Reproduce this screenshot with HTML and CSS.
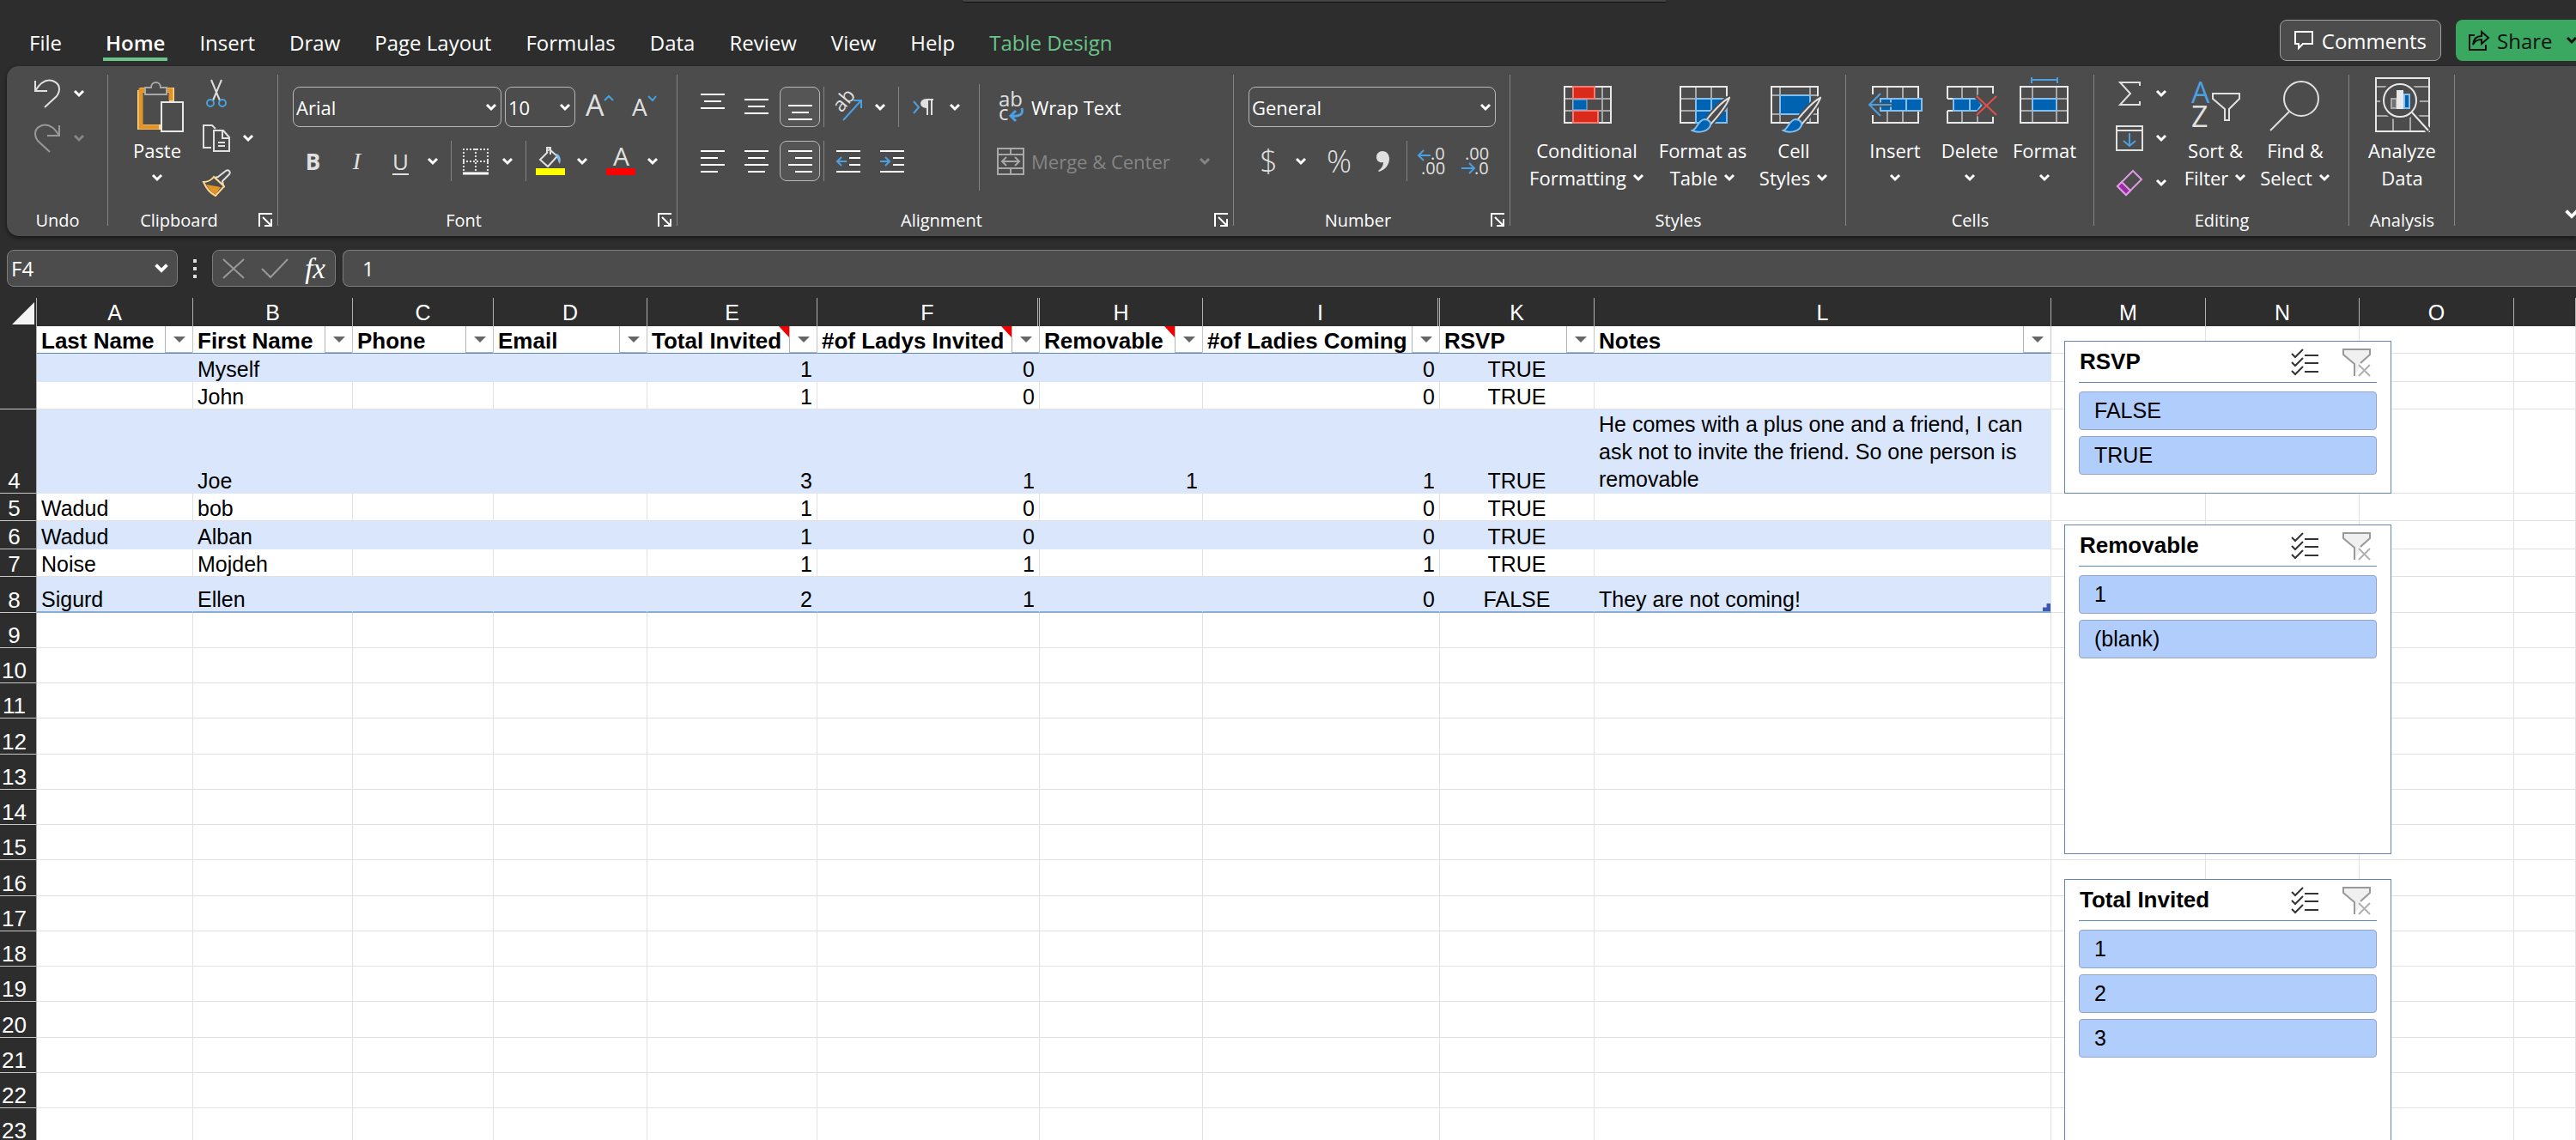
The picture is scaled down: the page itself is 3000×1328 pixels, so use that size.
FILE: index.html
```html
<!DOCTYPE html>
<html lang="en">
<head>
    <meta charset="UTF-8">
    <meta name="viewport" content="width=device-width, initial-scale=1.0">
    <title>Guest List</title>
    <link rel="stylesheet" href="styles.css">
</head>
<body>
    <!-- Shared icons -->
    <svg class="defs" aria-hidden="true">
        <symbol id="chevron" viewBox="0 0 14 10"><path d="M2 2l5 5 5-5" fill="none" stroke="currentColor" stroke-width="3"/></symbol>
        <symbol id="launcher" viewBox="0 0 17 17"><path d="M1 16V1h15M5 5l9 9M15 7v8H7" fill="none" stroke="currentColor" stroke-width="2"/></symbol>
        <symbol id="brush" viewBox="0 0 64 68">
            <path d="M63 26c-7 3-20 17-27 27l5 4C50 47 60 35 63 26z" fill="#4c4c4c" stroke="#4c4c4c" stroke-width="6"/>
            <path d="M63 26c-7 3-20 17-27 26l5 5C50 47 60 35 63 26z" fill="#4c4c4c" stroke="#e0e0e0" stroke-width="2"/>
            <path d="M20 64c6-2 6-12 14-13 6 0 9 5 6 9-4 6-14 7-20 4z" fill="#0063b1" stroke="#83beec" stroke-width="2"/>
        </symbol>
        <symbol id="checklist" viewBox="0 0 32 32">
            <path d="M1 6l4 4 9-9M1 16l4 4 9-9M1 26l4 4 9-9" fill="none" stroke="#333" stroke-width="2"/>
            <path d="M16 8h16M16 17h16M16 27h16" stroke="#333" stroke-width="2"/>
        </symbol>
        <symbol id="clear-filter" viewBox="0 0 34 34">
            <path d="M1 2h31v6L20 19v5l-6 8V19L1 8z" fill="#f0f0f0"/>
            <path d="M14 33V19L1 8V2h31v6L21 18" fill="none" stroke="#999" stroke-width="2"/>
            <path d="M19 20l13 13M32 20L19 33" stroke="#b0b0b0" stroke-width="2"/>
        </symbol>
    </svg>

    <header class="titlebar">
        <div class="search-edge"></div>
        <nav class="tabs">
            <a class="file" href="#">File</a>
            <a class="active" href="#">Home</a>
            <a href="#">Insert</a>
            <a href="#">Draw</a>
            <a href="#">Page Layout</a>
            <a href="#">Formulas</a>
            <a href="#">Data</a>
            <a href="#">Review</a>
            <a href="#">View</a>
            <a href="#">Help</a>
            <a class="design" href="#">Table Design</a>
        </nav>
        <button class="comments">
            <svg width="23" height="24" viewBox="0 0 23 24"><path d="M1 2h20v14H10l-5 5v-5H1z" fill="none" stroke="#fff" stroke-width="2"/></svg>
            Comments
        </button>
        <button class="share">
            <svg width="24" height="26" viewBox="0 0 24 26"><path d="M7 7H1v17h19v-6M5 18c1-8 5-10 10-10V3l8 7-8 7v-5c-5 0-8 2-10 6z" fill="none" stroke="#111" stroke-width="2"/></svg>
            Share
            <svg class="chev" width="14" height="10"><use href="#chevron"/></svg>
        </button>
    </header>

    <section class="ribbon">
        <div class="group undo">
            <div class="group-body">
                <div class="stack">
                    <div class="row">
                        <button class="tool" aria-label="Undo"><svg width="32" height="36" viewBox="0 0 32 36"><path d="M2 3v12h14M2 15C8 5 15 1 22 3c9 3 10 11 5 18L13 34" fill="none" stroke="#e0e0e0" stroke-width="2"/></svg></button>
                        <button class="drop" aria-label="Undo list"><svg class="chev" width="14" height="10"><use href="#chevron"/></svg></button>
                    </div>
                    <div class="row dim">
                        <button class="tool" aria-label="Redo"><svg width="32" height="36" viewBox="0 0 32 36"><path d="M30 3v12H16M30 15C24 5 17 1 10 3c-9 3-10 11-5 18l14 13" fill="none" stroke="#999" stroke-width="2"/></svg></button>
                        <button class="drop" aria-label="Redo list"><svg class="chev" width="14" height="10"><use href="#chevron"/></svg></button>
                    </div>
                </div>
            </div>
            <div class="group-label"><span>Undo</span></div>
        </div>

        <div class="group clipboard">
            <div class="group-body">
                <button class="big">
                    <svg width="64" height="68" viewBox="0 0 64 68">
                        <path d="M12 17h37v13M36 60H12V17" fill="none" stroke="#ffd890" stroke-width="6"/>
                        <path d="M34 60H13V17h35v12" fill="none" stroke="#e39426" stroke-width="5"/>
                        <path d="M18 22v-8h7c0-8 11-8 11 0h7v8z" fill="#4c4c4c" stroke="#a8a8a8" stroke-width="2"/>
                        <path d="M37 31h25v34H37z" fill="#4c4c4c" stroke="#e8e8e8" stroke-width="2"/>
                    </svg>
                    <span>Paste</span>
                    <svg class="chev under" width="14" height="10"><use href="#chevron"/></svg>
                </button>
                <div class="stack">
                    <div class="row">
                        <button class="tool" aria-label="Cut"><svg width="32" height="34" viewBox="0 0 32 34"><path d="M10 1l10 24M22 1L12 25" stroke="#e0e0e0" stroke-width="2"/><circle cx="9" cy="28" r="4" fill="none" stroke="#4aa0e0" stroke-width="2"/><circle cx="23" cy="28" r="4" fill="none" stroke="#4aa0e0" stroke-width="2"/></svg></button>
                    </div>
                    <div class="row">
                        <button class="tool" aria-label="Copy"><svg width="32" height="34" viewBox="0 0 32 34"><path d="M10 28H1V2h10l4 4M13 8h11l7 8v16H13zM23 8v9h8M18 22h8M18 26h8" fill="none" stroke="#e0e0e0" stroke-width="2"/></svg></button>
                        <button class="drop" aria-label="Copy options"><svg class="chev" width="14" height="10"><use href="#chevron"/></svg></button>
                    </div>
                    <div class="row">
                        <button class="tool" aria-label="Format Painter"><svg width="34" height="32" viewBox="0 0 34 32"><path d="M19 9l9-7c3-2 6 1 4 4l-8 8 1 5-10-9z" fill="none" stroke="#e0e0e0" stroke-width="2"/><path d="M14 9l12 11-10 11C10 28 5 22 2 15c5 0 9-2 12-6z" fill="#4c4c4c" stroke="#ffd890" stroke-width="2"/><path d="M5 18l17 3-6 9c-5-3-8-7-11-12z" fill="#e39426"/></svg></button>
                    </div>
                </div>
            </div>
            <div class="group-label"><span>Clipboard</span><button class="launch" aria-label="Clipboard settings"><svg width="17" height="17"><use href="#launcher"/></svg></button></div>
        </div>

        <div class="group font">
            <div class="group-body">
                <div class="lines">
                    <div class="row">
                        <div class="select name"><select aria-label="Font"><option>Arial</option></select><svg class="chev" width="14" height="10"><use href="#chevron"/></svg></div>
                        <div class="select size"><select aria-label="Font size"><option>10</option></select><svg class="chev" width="14" height="10"><use href="#chevron"/></svg></div>
                        <button class="tool" aria-label="Increase font size"><svg width="32" height="36" viewBox="0 0 32 36"><text x="0" y="28" font-size="34">A</text><path d="M22 10l5-5 5 5" fill="none" stroke="#4aa0e0" stroke-width="2"/></svg></button>
                        <button class="tool" aria-label="Decrease font size"><svg width="32" height="36" viewBox="0 0 32 36"><text x="3" y="28" font-size="28">A</text><path d="M22 5l5 5 4-5" fill="none" stroke="#4aa0e0" stroke-width="2"/></svg></button>
                    </div>
                    <div class="row">
                        <button class="tool letter bold">B</button>
                        <button class="tool letter italic">I</button>
                        <button class="tool letter underline">U</button>
                        <button class="drop" aria-label="Underline styles"><svg class="chev" width="14" height="10"><use href="#chevron"/></svg></button>
                        <i class="sep"></i>
                        <button class="tool" aria-label="Borders"><svg width="32" height="32" viewBox="0 0 32 32"><path d="M1 2h30M1 16h30M2 1v27M16 1v27M30 1v27" stroke="#e0e0e0" stroke-width="2" stroke-dasharray="2 2"/><path d="M1 30h30" stroke="#fff" stroke-width="3"/></svg></button>
                        <button class="drop" aria-label="Border list"><svg class="chev" width="14" height="10"><use href="#chevron"/></svg></button>
                        <i class="sep"></i>
                        <button class="tool" aria-label="Fill color"><svg width="34" height="34" viewBox="0 0 34 34"><path d="M14 6L5 15l9 8 11-12-9-8-3 2V1h4v8" fill="none" stroke="#e0e0e0" stroke-width="2"/><path d="M24 8c4 1 6 6 4 12-3-3-2-8-5-10z" fill="#83beec"/><path d="M0 25h34v8H0z" fill="#ffff00"/></svg></button>
                        <button class="drop" aria-label="Fill colors"><svg class="chev" width="14" height="10"><use href="#chevron"/></svg></button>
                        <button class="tool" aria-label="Font color"><svg width="34" height="34" viewBox="0 0 34 34"><text x="8" y="22" font-size="30">A</text><path d="M0 25h34v8H0z" fill="#ff0000"/></svg></button>
                        <button class="drop" aria-label="Font colors"><svg class="chev" width="14" height="10"><use href="#chevron"/></svg></button>
                    </div>
                </div>
            </div>
            <div class="group-label"><span>Font</span><button class="launch" aria-label="Font settings"><svg width="17" height="17"><use href="#launcher"/></svg></button></div>
        </div>

        <div class="group alignment">
            <div class="group-body">
                <div class="lines">
                    <div class="row">
                        <button class="tool" aria-label="Top align"><svg width="30" height="32" viewBox="0 0 30 32"><path d="M1 1h28M5 9h20M1 17h28" stroke="#fff" stroke-width="2"/></svg></button>
                        <button class="tool" aria-label="Middle align"><svg width="30" height="32" viewBox="0 0 30 32"><path d="M1 7h28M5 15h20M1 23h28" stroke="#fff" stroke-width="2"/></svg></button>
                        <button class="tool on" aria-label="Bottom align"><svg width="30" height="32" viewBox="0 0 30 32"><path d="M1 14h28M5 22h20M1 30h28" stroke="#fff" stroke-width="2"/></svg></button>
                        <i class="sep"></i>
                        <button class="tool" aria-label="Orientation"><svg width="34" height="34" viewBox="0 0 34 34"><text x="0" y="0" font-size="23" transform="translate(9 24) rotate(-50)">ab</text><path d="M11 32L31 10M23 9h9v9" fill="none" stroke="#4aa0e0" stroke-width="2"/></svg></button>
                        <button class="drop" aria-label="Orientation list"><svg class="chev" width="14" height="10"><use href="#chevron"/></svg></button>
                        <i class="sep"></i>
                        <button class="tool" aria-label="Text direction"><svg width="26" height="26" viewBox="0 0 26 26"><path d="M2 6l6 7-6 7" fill="none" stroke="#4aa0e0" stroke-width="2"/><path d="M17 13c-8 0-8-9 0-9h8M18 4v18M23 4v18" fill="none" stroke="#e0e0e0" stroke-width="2"/><path d="M17 13c-8 0-8-9 0-9z" fill="#e0e0e0"/></svg></button>
                        <button class="drop" aria-label="Text direction list"><svg class="chev" width="14" height="10"><use href="#chevron"/></svg></button>
                    </div>
                    <div class="row">
                        <button class="tool" aria-label="Align left"><svg width="30" height="28" viewBox="0 0 30 28"><path d="M1 2h28M1 10h20M1 18h28M1 26h20" stroke="#fff" stroke-width="2"/></svg></button>
                        <button class="tool" aria-label="Center"><svg width="30" height="28" viewBox="0 0 30 28"><path d="M1 2h28M5 10h20M1 18h28M5 26h20" stroke="#fff" stroke-width="2"/></svg></button>
                        <button class="tool on" aria-label="Align right"><svg width="30" height="28" viewBox="0 0 30 28"><path d="M1 2h28M9 10h20M1 18h28M9 26h20" stroke="#fff" stroke-width="2"/></svg></button>
                        <i class="sep"></i>
                        <button class="tool" aria-label="Decrease indent"><svg width="30" height="28" viewBox="0 0 30 28"><path d="M1 2h28M16 10h13M16 18h13M1 26h28" stroke="#fff" stroke-width="2"/><path d="M13 14H2M7 9l-5 5 5 5" fill="none" stroke="#4aa0e0" stroke-width="2"/></svg></button>
                        <button class="tool" aria-label="Increase indent"><svg width="30" height="28" viewBox="0 0 30 28"><path d="M1 2h28M16 10h13M16 18h13M1 26h28" stroke="#fff" stroke-width="2"/><path d="M1 14h11M7 9l5 5-5 5" fill="none" stroke="#4aa0e0" stroke-width="2"/></svg></button>
                    </div>
                </div>
                <i class="sep tall"></i>
                <div class="lines">
                    <button class="wide">
                        <svg width="32" height="36" viewBox="0 0 32 36"><text font-size="24"><tspan x="2" y="17">ab</tspan><tspan x="2" y="33">c</tspan></text><path d="M29 19c2 7-2 10-13 9M22 22l-6 6 6 6" fill="none" stroke="#4aa0e0" stroke-width="3"/></svg>
                        Wrap Text
                    </button>
                    <div class="row dim">
                        <button class="wide">
                            <svg width="32" height="32" viewBox="0 0 32 32"><path d="M1 1h30v30H1zM1 8h30M1 24h30M16 1v7M16 24v7M6 16h20M11 11l-5 5 5 5M21 11l5 5-5 5" fill="none" stroke="#a8a8a8" stroke-width="2"/></svg>
                            Merge &amp; Center
                        </button>
                        <button class="drop" aria-label="Merge list"><svg class="chev" width="14" height="10"><use href="#chevron"/></svg></button>
                    </div>
                </div>
            </div>
            <div class="group-label"><span>Alignment</span><button class="launch" aria-label="Alignment settings"><svg width="17" height="17"><use href="#launcher"/></svg></button></div>
        </div>

        <div class="group number">
            <div class="group-body">
                <div class="lines">
                    <div class="select format"><select aria-label="Number format"><option>General</option></select><svg class="chev" width="14" height="10"><use href="#chevron"/></svg></div>
                    <div class="row">
                        <button class="tool symbol">$</button>
                        <button class="drop" aria-label="Currency list"><svg class="chev" width="14" height="10"><use href="#chevron"/></svg></button>
                        <button class="tool symbol">%</button>
                        <button class="tool" aria-label="Comma style"><svg width="18" height="28" viewBox="0 0 18 28"><path d="M8 2c5 0 8 4 8 9 0 7-5 13-12 15l-1-1c4-3 6-6 6-10-4 1-8-1-8-6 0-4 3-7 7-7z" fill="#e0e0e0"/></svg></button>
                        <i class="sep"></i>
                        <button class="tool" aria-label="Increase decimal"><svg width="34" height="34" viewBox="0 0 34 34"><text font-size="20"><tspan x="16" y="15">.0</tspan><tspan x="5" y="32">.00</tspan></text><path d="M16 10H2M8 4l-6 6 6 6" fill="none" stroke="#4aa0e0" stroke-width="2"/></svg></button>
                        <button class="tool" aria-label="Decrease decimal"><svg width="34" height="34" viewBox="0 0 34 34"><text font-size="20"><tspan x="5" y="15">.00</tspan><tspan x="16" y="32">.0</tspan></text><path d="M1 25h15M10 19l6 6-6 6" fill="none" stroke="#4aa0e0" stroke-width="2"/></svg></button>
                    </div>
                </div>
            </div>
            <div class="group-label"><span>Number</span><button class="launch" aria-label="Number settings"><svg width="17" height="17"><use href="#launcher"/></svg></button></div>
        </div>

        <div class="group styles">
            <div class="group-body">
                <button class="big cond">
                    <svg width="64" height="68" viewBox="0 0 64 68">
                        <path d="M6 13h54v42H6zM16 13v42M50 13v42M6 27h54M6 41h54" fill="none" stroke="#a8a8a8" stroke-width="2"/>
                        <path d="M6 13h54v42H6z" fill="none" stroke="#e8e8e8" stroke-width="2"/>
                        <path d="M16 13h25v14H16zM16 41h29v14H16z" fill="#d92a1c" stroke="#f47c74" stroke-width="2"/>
                        <path d="M16 28h16v12H16z" fill="#0063b1" stroke="#83beec"/>
                    </svg>
                    <span>Conditional</span>
                    <span>Formatting <svg class="chev" width="14" height="10"><use href="#chevron"/></svg></span>
                </button>
                <button class="big fmt">
                    <svg width="64" height="68" viewBox="0 0 64 68">
                        <path d="M24 13v42M42 13v42M6 27h54M6 41h54" stroke="#a8a8a8" stroke-width="2"/>
                        <path d="M6 13h54v42H6z" fill="none" stroke="#e8e8e8" stroke-width="2"/>
                        <path d="M24 27h36v28H24zM24 41h36M42 27v28" fill="#0063b1" stroke="#83beec" stroke-width="2"/>
                        <use href="#brush"/>
                    </svg>
                    <span>Format as</span>
                    <span>Table <svg class="chev" width="14" height="10"><use href="#chevron"/></svg></span>
                </button>
                <button class="big">
                    <svg width="64" height="68" viewBox="0 0 64 68">
                        <path d="M16 13v42M51 13v42M6 23h54M6 45h54" stroke="#a8a8a8" stroke-width="2"/>
                        <path d="M6 13h54v42H6z" fill="none" stroke="#e8e8e8" stroke-width="2"/>
                        <path d="M16 23h35v22H16z" fill="#0063b1" stroke="#83beec" stroke-width="2"/>
                        <use href="#brush"/>
                    </svg>
                    <span>Cell</span>
                    <span>Styles <svg class="chev" width="14" height="10"><use href="#chevron"/></svg></span>
                </button>
            </div>
            <div class="group-label"><span>Styles</span></div>
        </div>

        <div class="group cells">
            <div class="group-body">
                <button class="big">
                    <svg width="64" height="68" viewBox="0 0 64 68">
                        <path d="M23 13v42M41 13v42" stroke="#a8a8a8" stroke-width="2"/>
                        <path d="M6 22v-9h53v14M6 46v9h53V41" fill="none" stroke="#e8e8e8" stroke-width="2"/>
                        <path d="M15 27h48v14H15zM27 27v14M45 27v14" fill="#0063b1" stroke="#83beec" stroke-width="2"/>
                        <path d="M28 34H2M15 21L2 34l13 13" fill="none" stroke="#4c4c4c" stroke-width="5"/>
                        <path d="M28 34H2M15 21L2 34l13 13" fill="none" stroke="#4aa0e0" stroke-width="2"/>
                    </svg>
                    <span>Insert</span>
                    <svg class="chev under" width="14" height="10"><use href="#chevron"/></svg>
                </button>
                <button class="big">
                    <svg width="64" height="68" viewBox="0 0 64 68">
                        <path d="M23 13v42M41 13v42" stroke="#a8a8a8" stroke-width="2"/>
                        <path d="M6 27V13h53v8M6 41v14h53v-7M6 27h6M6 41h6" fill="none" stroke="#e8e8e8" stroke-width="2"/>
                        <path d="M13 27h28l5 7-5 7H13zM32 27v14" fill="#0063b1" stroke="#83beec" stroke-width="2"/>
                        <path d="M40 24l23 22M63 24L40 46" stroke="#4c4c4c" stroke-width="6"/>
                        <path d="M40 24l23 22M63 24L40 46" stroke="#e0514b" stroke-width="2"/>
                    </svg>
                    <span>Delete</span>
                    <svg class="chev under" width="14" height="10"><use href="#chevron"/></svg>
                </button>
                <button class="big">
                    <svg width="64" height="68" viewBox="0 0 64 68">
                        <path d="M18 13v42M46 13v42M4 27h55M4 41h55" stroke="#a8a8a8" stroke-width="2"/>
                        <path d="M4 13h55v42H4z" fill="none" stroke="#e8e8e8" stroke-width="2"/>
                        <path d="M18 27h28v14H18z" fill="#0063b1" stroke="#83beec" stroke-width="2"/>
                        <path d="M17 2v7M47 2v7M17 5h30" stroke="#4aa0e0" stroke-width="2"/>
                    </svg>
                    <span>Format</span>
                    <svg class="chev under" width="14" height="10"><use href="#chevron"/></svg>
                </button>
            </div>
            <div class="group-label"><span>Cells</span></div>
        </div>

        <div class="group editing">
            <div class="group-body">
                <div class="stack">
                    <div class="row">
                        <button class="tool" aria-label="AutoSum"><svg width="28" height="30" viewBox="0 0 28 30"><path d="M26 6V2H3l12 13L3 28h23v-4" fill="none" stroke="#e0e0e0" stroke-width="2"/></svg></button>
                        <button class="drop" aria-label="AutoSum list"><svg class="chev" width="14" height="10"><use href="#chevron"/></svg></button>
                    </div>
                    <div class="row">
                        <button class="tool" aria-label="Fill"><svg width="32" height="30" viewBox="0 0 32 30"><path d="M1 1h30v28H1zM1 6h30" fill="none" stroke="#e0e0e0" stroke-width="2"/><path d="M16 9v15M9 18l7 6 7-6" fill="none" stroke="#4aa0e0" stroke-width="2"/></svg></button>
                        <button class="drop" aria-label="Fill list"><svg class="chev" width="14" height="10"><use href="#chevron"/></svg></button>
                    </div>
                    <div class="row">
                        <button class="tool" aria-label="Clear"><svg width="32" height="32" viewBox="0 0 32 32"><path d="M20 2l10 10-18 18L2 20z" fill="none" stroke="#dc9be0" stroke-width="2"/><path d="M7 15l10 10-5 5L2 20z" fill="#9b2aa6" stroke="#dc9be0" stroke-width="2"/></svg></button>
                        <button class="drop" aria-label="Clear list"><svg class="chev" width="14" height="10"><use href="#chevron"/></svg></button>
                    </div>
                </div>
                <button class="big">
                    <svg width="64" height="68" viewBox="0 0 64 68"><text font-size="34"><tspan class="blue" x="4" y="32">A</tspan><tspan x="4" y="60">Z</tspan></text><path d="M29 21h31v6L48 39v13h-5V39L29 27z" fill="none" stroke="#e0e0e0" stroke-width="2"/></svg>
                    <span>Sort &amp;</span>
                    <span>Filter <svg class="chev" width="14" height="10"><use href="#chevron"/></svg></span>
                </button>
                <button class="big">
                    <svg width="64" height="68" viewBox="0 0 64 68"><circle cx="39" cy="27" r="20" fill="none" stroke="#e0e0e0" stroke-width="2"/><path d="M25 42L3 64" stroke="#e0e0e0" stroke-width="2"/></svg>
                    <span>Find &amp;</span>
                    <span>Select <svg class="chev" width="14" height="10"><use href="#chevron"/></svg></span>
                </button>
            </div>
            <div class="group-label"><span>Editing</span></div>
        </div>

        <div class="group analysis">
            <div class="group-body">
                <button class="big">
                    <svg width="64" height="68" viewBox="0 0 64 68">
                        <path d="M1 13h62M1 30h62M1 47h62M21 47v18M41 47v18" stroke="#a8a8a8" stroke-width="2"/>
                        <path d="M1 3h62v62H1z" fill="none" stroke="#e8e8e8" stroke-width="2"/>
                        <circle cx="29" cy="29" r="23" fill="#4c4c4c"/>
                        <path d="M44 44l19 21" stroke="#4c4c4c" stroke-width="7"/>
                        <circle cx="29" cy="29" r="19" fill="#4c4c4c" stroke="#e8e8e8" stroke-width="2"/>
                        <path d="M43 43l19 21" stroke="#e8e8e8" stroke-width="2"/>
                        <path d="M19 27h6v11h-6z" fill="#707070" stroke="#a8a8a8" stroke-width="2"/>
                        <path d="M25 17h8v22h-8z" fill="#e8e8e8"/>
                        <path d="M34 22h6v16h-6z" fill="#0063b1" stroke="#83beec" stroke-width="2"/>
                    </svg>
                    <span>Analyze</span>
                    <span>Data</span>
                </button>
            </div>
            <div class="group-label"><span>Analysis</span></div>
        </div>
        <button class="collapse" aria-label="Collapse ribbon"><svg class="chev" width="18" height="13"><use href="#chevron"/></svg></button>
    </section>

    <section class="formula-bar">
        <div class="name-box"><input type="text" value="F4" aria-label="Name box"><svg class="chev" width="18" height="13"><use href="#chevron"/></svg></div>
        <svg width="4" height="22" viewBox="0 0 4 22"><path d="M0 0h4v4H0zM0 9h4v4H0zM0 18h4v4H0z" fill="#e0e0e0"/></svg>
        <div class="formula-tools">
            <button aria-label="Cancel"><svg width="26" height="24" viewBox="0 0 26 24"><path d="M1 1l24 22M25 1L1 23" stroke="#999" stroke-width="2"/></svg></button>
            <button aria-label="Enter"><svg width="32" height="24" viewBox="0 0 32 24"><path d="M1 12l10 10L31 1" fill="none" stroke="#999" stroke-width="2"/></svg></button>
            <button class="fx">fx</button>
        </div>
        <input class="formula" type="text" value="1" aria-label="Formula">
    </section>

    <main class="sheet">
        <table>
            <colgroup>
                <col class="c-num"><col class="c-a"><col class="c-b"><col class="c-c"><col class="c-d"><col class="c-e"><col class="c-f"><col class="c-h"><col class="c-i"><col class="c-k"><col class="c-l"><col class="c-m"><col class="c-n"><col class="c-o"><col>
            </colgroup>
            <thead>
                <tr>
                    <th class="corner"><svg width="26" height="26" viewBox="0 0 26 26"><path d="M26 0v26H0z" fill="#f4f4f4"/></svg></th>
                    <th>A</th><th>B</th><th>C</th><th>D</th><th>E</th><th class="hidden-next">F</th><th>H</th><th class="hidden-next">I</th><th>K</th><th>L</th><th>M</th><th>N</th><th>O</th><th></th>
                </tr>
            </thead>
            <tbody id="rows">
                <tr class="fields">
                    <th class="num" rowspan="3"></th>
                    <td><div>Last Name<button aria-label="Filter Last Name"></button></div></td>
                    <td><div>First Name<button aria-label="Filter First Name"></button></div></td>
                    <td><div>Phone<button aria-label="Filter Phone"></button></div></td>
                    <td><div>Email<button aria-label="Filter Email"></button></div></td>
                    <td><div class="noted">Total Invited<button aria-label="Filter Total Invited"></button></div></td>
                    <td><div class="noted">#of Ladys Invited<button aria-label="Filter Ladys Invited"></button></div></td>
                    <td><div class="noted">Removable<button aria-label="Filter Removable"></button></div></td>
                    <td><div>#of Ladies Coming<button aria-label="Filter Ladies Coming"></button></div></td>
                    <td><div>RSVP<button aria-label="Filter RSVP"></button></div></td>
                    <td><div>Notes<button aria-label="Filter Notes"></button></div></td>
                    <td class="out"></td><td class="out"></td><td class="out"></td><td class="out"></td>
                </tr>
                <tr class="band"><td></td><td>Myself</td><td></td><td></td><td>1</td><td>0</td><td></td><td>0</td><td>TRUE</td><td></td><td></td><td></td><td></td><td></td></tr>
                <tr><td></td><td>John</td><td></td><td></td><td>1</td><td>0</td><td></td><td>0</td><td>TRUE</td><td></td><td></td><td></td><td></td><td></td></tr>
                <tr class="band tall-row"><th class="num">4</th><td></td><td>Joe</td><td></td><td></td><td>3</td><td>1</td><td>1</td><td>1</td><td>TRUE</td><td class="note">He comes with a plus one and a friend, I can ask not to invite the friend. So one person is removable</td><td></td><td></td><td></td><td></td></tr>
                <tr><th class="num">5</th><td>Wadud</td><td>bob</td><td></td><td></td><td>1</td><td>0</td><td></td><td>0</td><td>TRUE</td><td></td><td></td><td></td><td></td><td></td></tr>
                <tr class="band"><th class="num">6</th><td>Wadud</td><td>Alban</td><td></td><td></td><td>1</td><td>0</td><td></td><td>0</td><td>TRUE</td><td></td><td></td><td></td><td></td><td></td></tr>
                <tr><th class="num">7</th><td>Noise</td><td>Mojdeh</td><td></td><td></td><td>1</td><td>1</td><td></td><td>1</td><td>TRUE</td><td></td><td></td><td></td><td></td><td></td></tr>
                <tr class="band last"><th class="num">8</th><td>Sigurd</td><td>Ellen</td><td></td><td></td><td>2</td><td>1</td><td></td><td>0</td><td>FALSE</td><td class="end">They are not coming!</td><td></td><td></td><td></td><td></td></tr>
                <!-- Empty rows will be added here -->
            </tbody>
        </table>

        <!-- Slicers float over the cells -->
        <div class="slicer slicer-rsvp">
            <div class="slicer-head"><h2>RSVP</h2><button aria-label="Multi-select"><svg width="32" height="32"><use href="#checklist"/></svg></button><button aria-label="Clear filter"><svg width="34" height="34"><use href="#clear-filter"/></svg></button></div>
            <button class="item">FALSE</button>
            <button class="item">TRUE</button>
        </div>
        <div class="slicer slicer-removable">
            <div class="slicer-head"><h2>Removable</h2><button aria-label="Multi-select"><svg width="32" height="32"><use href="#checklist"/></svg></button><button aria-label="Clear filter"><svg width="34" height="34"><use href="#clear-filter"/></svg></button></div>
            <button class="item">1</button>
            <button class="item">(blank)</button>
        </div>
        <div class="slicer slicer-total">
            <div class="slicer-head"><h2>Total Invited</h2><button aria-label="Multi-select"><svg width="32" height="32"><use href="#checklist"/></svg></button><button aria-label="Clear filter"><svg width="34" height="34"><use href="#clear-filter"/></svg></button></div>
            <button class="item">1</button>
            <button class="item">2</button>
            <button class="item">3</button>
        </div>
    </main>

    <script>
        let body = document.getElementById('rows');

        for (let n = 9; n <= 23; n++) {
            let row = document.createElement('tr');
            row.classList.add('empty');

            let num = document.createElement('th');
            num.classList.add('num');
            num.textContent = n;
            row.appendChild(num);

            for (let c = 0; c < 14; c++) {
                row.appendChild(document.createElement('td'));
            }
            body.appendChild(row);
        }
    </script>
</body>
</html>
```

FILE: styles.css
```css
* {
    box-sizing: border-box;
}

body {
    margin: 0;
    height: 100vh;
    display: flex;
    flex-direction: column;
    overflow: hidden;
    background-color: #2d2d2d;
    color: #fff;
    font-family: "Open Sans", "Noto Sans", sans-serif;
    font-size: 22px;
}

button, input, select {
    font: inherit;
    color: inherit;
    background: none;
    border: none;
    padding: 0;
    margin: 0;
}

button {
    cursor: pointer;
}

svg {
    display: block;
    flex-shrink: 0;
    overflow: visible;
}

svg text {
    fill: #e0e0e0;
    font-family: "Open Sans", sans-serif;
}

svg .blue {
    fill: #4aa0e0;
}

.defs {
    position: absolute;
    width: 0;
    height: 0;
}

/* Title bar and tabs */
.titlebar {
    position: relative;
    display: flex;
    align-items: flex-start;
    height: 77px;
    flex-shrink: 0;
    padding-top: 23px;
    font-size: 24px;
}

.search-edge {
    position: absolute;
    top: 0;
    left: 1121px;
    width: 820px;
    height: 3px;
    background-color: #444;
    border-bottom: 1px solid #111;
    border-radius: 0 0 6px 6px;
}

.tabs {
    display: flex;
    gap: 40px;
    margin-right: auto;
    padding-left: 34px;
}

.tabs a {
    color: #fff;
    text-decoration: none;
    line-height: 32px;
    padding: 11px 0 1px;
    border-bottom: 4px solid transparent;
}

.tabs .file {
    margin-right: 8px;
}

.tabs .active {
    font-weight: 600;
    padding-left: 3px;
    padding-right: 3px;
    margin-right: -3px;
    border-color: #6bc48a;
}

.tabs .design {
    color: #6bc48a;
}

.comments, .share {
    display: flex;
    align-items: center;
    height: 48px;
    gap: 9px;
}

.comments {
    border: 1px solid #a0a0a0;
    border-radius: 8px;
    background-color: #4c4c4c;
    padding: 0 16px;
    margin-right: 17px;
}

.share {
    width: 140px;
    overflow: hidden;
    border-radius: 8px 0 0 8px;
    background-color: #3aa860;
    color: #111;
    padding-left: 15px;
}

.share .chev {
    margin-left: 6px;
}

/* Ribbon */
.ribbon {
    display: flex;
    height: 198px;
    flex-shrink: 0;
    margin-left: 8px;
    background-color: #4c4c4c;
    border-radius: 14px 0 0 14px;
    box-shadow: 0 2px 4px #161616;
}

.group {
    position: relative;
    flex-shrink: 0;
    padding-top: 6px;
}

.group::after {
    content: "";
    position: absolute;
    top: 10px;
    bottom: 12px;
    right: 0;
    width: 1px;
    background-color: #858585;
}

.undo { width: 118px; }
.clipboard { width: 198px; }
.font { width: 465px; }
.alignment { width: 648px; }
.number { width: 322px; }
.styles { width: 391px; }
.cells { width: 289px; }
.editing { width: 297px; }
.analysis { width: 123px; }

.group-body {
    display: flex;
    height: 156px;
    padding-left: 17px;
}

.undo .group-body {
    padding-left: 23px;
}

.clipboard .group-body {
    gap: 5px;
}

.styles .group-body {
    gap: 8px;
    padding-left: 20px;
}

.cells .group-body {
    gap: 7px;
}

.editing .group-body {
    gap: 5px;
}

.editing .stack {
    width: 75px;
}

.analysis .group-body {
    justify-content: center;
    padding-left: 0;
}

.group-label {
    display: flex;
    height: 34px;
    align-items: center;
    font-size: 20px;
}

.group-label span {
    flex: 1;
    text-align: center;
}

.launch {
    width: 33px;
    padding-left: 10px;
}

.row {
    display: flex;
    align-items: center;
    gap: 4px;
}

.stack .row {
    height: 52px;
}

.lines {
    display: flex;
    flex-direction: column;
    gap: 16px;
    padding-top: 18px;
}

.tool, .drop {
    display: flex;
    align-items: center;
    justify-content: center;
    flex-shrink: 0;
    width: 47px;
    height: 47px;
    border-radius: 8px;
}

.drop {
    justify-content: flex-start;
    width: 27px;
    padding-left: 3px;
}

.tool.on {
    border: 1px solid #b8b8b8;
    background-color: #555;
}

.dim {
    color: #858585;
}

.letter {
    color: #e0e0e0;
    font-size: 26px;
}

.bold {
    font-weight: 700;
}

.italic {
    font-family: "Liberation Serif", serif;
    font-style: italic;
    font-size: 28px;
}

.underline {
    text-decoration: underline;
    text-underline-offset: 4px;
}

.symbol {
    font-size: 36px;
    font-weight: 300;
    line-height: 47px;
    color: #e0e0e0;
}

.sep {
    width: 1px;
    height: 47px;
    background-color: #858585;
}

.sep.tall {
    height: 124px;
    margin: 15px 20px 0 11px;
}

.select {
    display: grid;
    align-items: center;
}

.select select, .select .chev {
    grid-area: 1 / 1;
}

.select select {
    appearance: none;
    height: 47px;
    border: 1px solid #b8b8b8;
    border-radius: 8px;
    padding-left: 3px;
}

.select .chev {
    justify-self: end;
    margin-right: 5px;
    pointer-events: none;
}

.name { width: 243px; }
.size { width: 82px; }
.format { width: 288px; }

.wide {
    display: flex;
    align-items: center;
    gap: 8px;
    height: 47px;
}

.wide + .drop {
    margin-left: 26px;
}

.big {
    display: flex;
    flex-direction: column;
    align-items: center;
    width: 80px;
    padding-top: 5px;
    line-height: 32px;
    white-space: nowrap;
}

.big > svg:first-child {
    margin-bottom: 3px;
}

.big span {
    display: flex;
    align-items: center;
    gap: 7px;
}

.big .under {
    margin-top: 11px;
}

.big.cond { width: 138px; }
.big.fmt { width: 116px; }
.editing .big { width: 88px; }

.collapse {
    margin: auto 0 19px auto;
    width: 14px;
    overflow: hidden;
}

/* Formula bar */
.formula-bar {
    display: flex;
    align-items: center;
    flex-shrink: 0;
    height: 43px;
    margin: 16px 0 13px 8px;
}

.formula-bar > svg {
    margin: 0 18px;
}

.name-box, .formula-tools, .formula {
    height: 43px;
    border: 1px solid #7c7c7c;
    border-radius: 8px;
    background-color: #4c4c4c;
    font-size: 24px;
}

.name-box {
    display: flex;
    align-items: center;
    width: 199px;
    padding: 0 9px 0 4px;
}

.name-box input {
    flex: 1;
    width: 100px;
}

.formula-tools {
    display: flex;
    align-items: center;
    justify-content: space-between;
    width: 144px;
    padding: 0 11px;
    margin-right: 8px;
}

.fx {
    font-family: "Liberation Serif", serif;
    font-style: italic;
    font-size: 33px;
    line-height: 40px;
}

.formula {
    flex: 1;
    border-right: none;
    border-radius: 8px 0 0 8px;
    padding-left: 22px;
}

/* Sheet */
.sheet {
    position: relative;
    flex: 1;
    overflow: hidden;
    background-color: #fff;
    color: #000;
    font-family: "Liberation Sans", Arial, sans-serif;
    font-size: 25px;
}

table {
    width: 100%;
    table-layout: fixed;
    border-collapse: separate;
    border-spacing: 0;
    line-height: 27px;
}

.c-num { width: 43px; }
.c-a { width: 182px; }
.c-b { width: 186px; }
.c-c { width: 164px; }
.c-d { width: 179px; }
.c-e { width: 198px; }
.c-f { width: 259px; }
.c-h { width: 190px; }
.c-i { width: 276px; }
.c-k { width: 180px; }
.c-l { width: 532px; }
.c-m { width: 180px; }
.c-n { width: 179px; }
.c-o { width: 180px; }

thead th {
    height: 33px;
    padding: 2px 0 0;
    background-color: #2d2d2d;
    color: #fff;
    font-weight: 400;
    border-right: 1px solid #b0b0b0;
}

thead .hidden-next {
    border-right: 3px double #b0b0b0;
}

.corner svg {
    margin-left: 14px;
}

tr {
    height: 32px;
}

tr.band {
    height: 33px;
}

td {
    padding: 0 5px 0 5px;
    vertical-align: bottom;
    border-right: 1px solid #e1e1e1;
    border-bottom: 1px solid #e1e1e1;
}

.num {
    padding: 0 9px 0 0;
    vertical-align: bottom;
    background-color: #2d2d2d;
    color: #fff;
    font-size: 26px;
    font-weight: 400;
    border-right: 1px solid #b0b0b0;
    border-bottom: 1px solid #c8c8c8;
}

/* Number columns, counted from the right so the merged row header does not matter */
td:nth-last-child(7), td:nth-last-child(8), td:nth-last-child(9), td:nth-last-child(10) {
    text-align: right;
}

td:nth-last-child(6) {
    text-align: center;
}

.band td:nth-last-child(n + 5) {
    background-color: #d9e6fb;
    border-color: #d9e6fb;
}

tr.tall-row {
    height: 98px;
}

.note {
    line-height: 32px;
}

tr.last {
    height: 42px;
}

.last td:nth-last-child(n + 5) {
    border-bottom: 2px solid #8badd2;
}

.end {
    position: relative;
}

.end::after {
    content: "";
    position: absolute;
    right: 0;
    bottom: 0;
    width: 9px;
    height: 9px;
    background-color: #3f57b0;
    clip-path: polygon(50% 0, 100% 0, 100% 100%, 0 100%, 0 50%, 50% 50%);
}

tr.empty {
    height: 41px;
}

tr.empty:nth-child(4n) {
    height: 42px;
}

.fields td {
    padding: 0 0 0 5px;
    border-right-color: #c4c4c4;
    border-bottom-color: #5f88b8;
    font-size: 26px;
    font-weight: 700;
    line-height: 34px;
    text-align: left;
}

.fields .out {
    border-color: #e1e1e1;
}

.fields div {
    position: relative;
    display: flex;
    justify-content: space-between;
    height: 31px;
    white-space: nowrap;
}

.fields button {
    display: flex;
    align-items: center;
    justify-content: center;
    width: 32px;
    border-left: 1px solid #b4b4b4;
    border-bottom: 1px solid #b4b4b4;
    background-color: #fff;
}

.fields button::after {
    content: "";
    border: 7px solid transparent;
    border-top-color: #666;
    border-bottom: none;
}

/* Red corner of a cell with a comment */
.noted::after {
    content: "";
    position: absolute;
    top: 0;
    right: 32px;
    width: 12px;
    height: 13px;
    background-color: #f00000;
    clip-path: polygon(0 0, 100% 0, 100% 100%);
}

/* Slicers */
.slicer {
    position: absolute;
    left: 2404px;
    width: 381px;
    padding: 0 16px;
    background-color: #fff;
    border: 1px solid #5f88b8;
}

.slicer-rsvp {
    top: 50px;
    height: 178px;
}

.slicer-removable {
    top: 264px;
    height: 384px;
}

.slicer-total {
    top: 677px;
    height: 384px;
}

.slicer-head {
    display: flex;
    align-items: center;
    gap: 28px;
    height: 48px;
    margin-bottom: 10px;
    padding: 0 6px 0 1px;
    border-bottom: 1px solid #5f88b8;
}

.slicer-head h2 {
    flex: 1;
    margin: 0;
    font-size: 26px;
}

.item {
    display: block;
    width: 100%;
    height: 45px;
    margin-bottom: 7px;
    padding-left: 17px;
    text-align: left;
    background-color: #b1cdfb;
    border: 1px solid #94a6c6;
    border-radius: 4px;
}
```
